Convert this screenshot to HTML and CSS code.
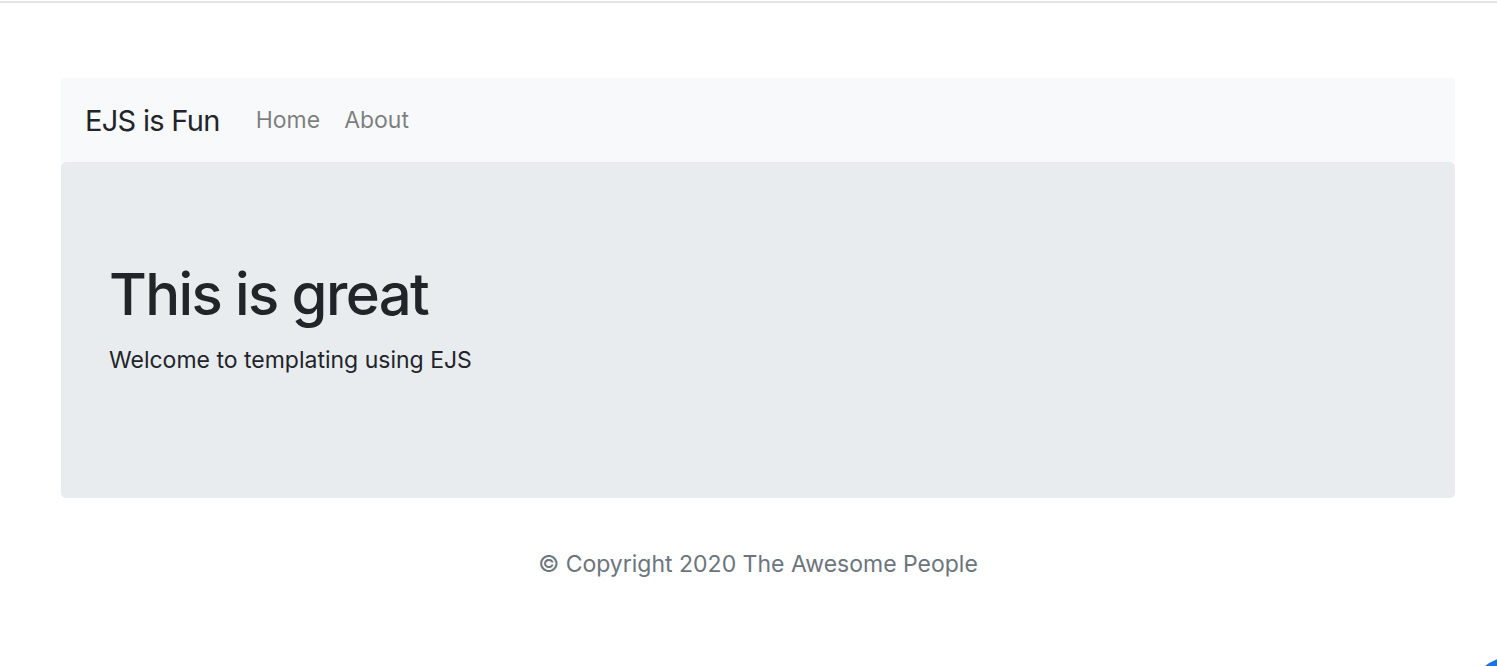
FILE: index.html
```html
<!DOCTYPE html>
<html lang="en">
<head>
<meta charset="utf-8">
<title>EJS is Fun</title>
<link rel="stylesheet" href="styles.css">
</head>
<body>
<div class="chrome-line"></div>
<div class="container">
  <nav class="navbar">
    <a class="brand" href="#">EJS is Fun</a>
    <ul class="nav">
      <li><a class="nav-link" href="#">Home</a></li>
      <li><a class="nav-link" href="#">About</a></li>
    </ul>
  </nav>
  <div class="jumbotron">
    <h1 class="title">This is great</h1>
    <p class="lead">Welcome to templating using EJS</p>
  </div>
  <footer class="footer">&copy; Copyright 2020 The Awesome People</footer>
</div>
<div class="corner"><div class="fab"></div></div>
</body>
</html>
```
FILE: styles.css
```css
html, body {
  margin: 0;
  padding: 0;
  height: 100%;
  overflow: hidden;
}
body {
  background: #ffffff;
  font-family: Inter, "Liberation Sans", Arial, sans-serif;
  color: #212529;
  position: relative;
}
.chrome-line {
  margin-top: 1px;
  height: 2px;
  background: #e4e4e6;
}
.container {
  width: 1394px;
  margin: 75px 0 0 61px;
}
.navbar {
  display: flex;
  align-items: center;
  height: 84px;
  padding: 0 24px;
  background: #f8f9fa;
  box-sizing: border-box;
}
.brand {
  font-size: 29px;
  line-height: 45px;
  color: #212529;
  text-decoration: none;
  margin-right: 24px;
  letter-spacing: -0.7px;
}
.nav {
  display: flex;
  list-style: none;
  margin: 0;
  padding: 0;
}
.nav-link {
  display: block;
  padding: 0 12px;
  font-size: 23px;
  line-height: 36px;
  color: rgba(0, 0, 0, 0.5);
  text-decoration: none;
}
.jumbotron {
  background: #e9ecef;
  border-radius: 5px;
  padding: 96px 48px;
  margin-bottom: 48px;
}
.title {
  margin: 0 0 12px;
  font-size: 58px;
  line-height: 72px;
  font-weight: 500;
  letter-spacing: -1.6px;
}
.lead {
  margin: 0 0 24px;
  font-size: 23px;
  line-height: 36px;
}
.footer {
  text-align: center;
  font-size: 23px;
  line-height: 36px;
  color: #6c757d;
}
.corner {
  position: absolute;
  right: 0;
  bottom: 0;
  width: 14px;
  height: 7px;
  overflow: hidden;
}
.fab {
  width: 100px;
  height: 100px;
  border-radius: 50%;
  background: #1a73e8;
  margin: -3px 0 0 -18px;
}
```
